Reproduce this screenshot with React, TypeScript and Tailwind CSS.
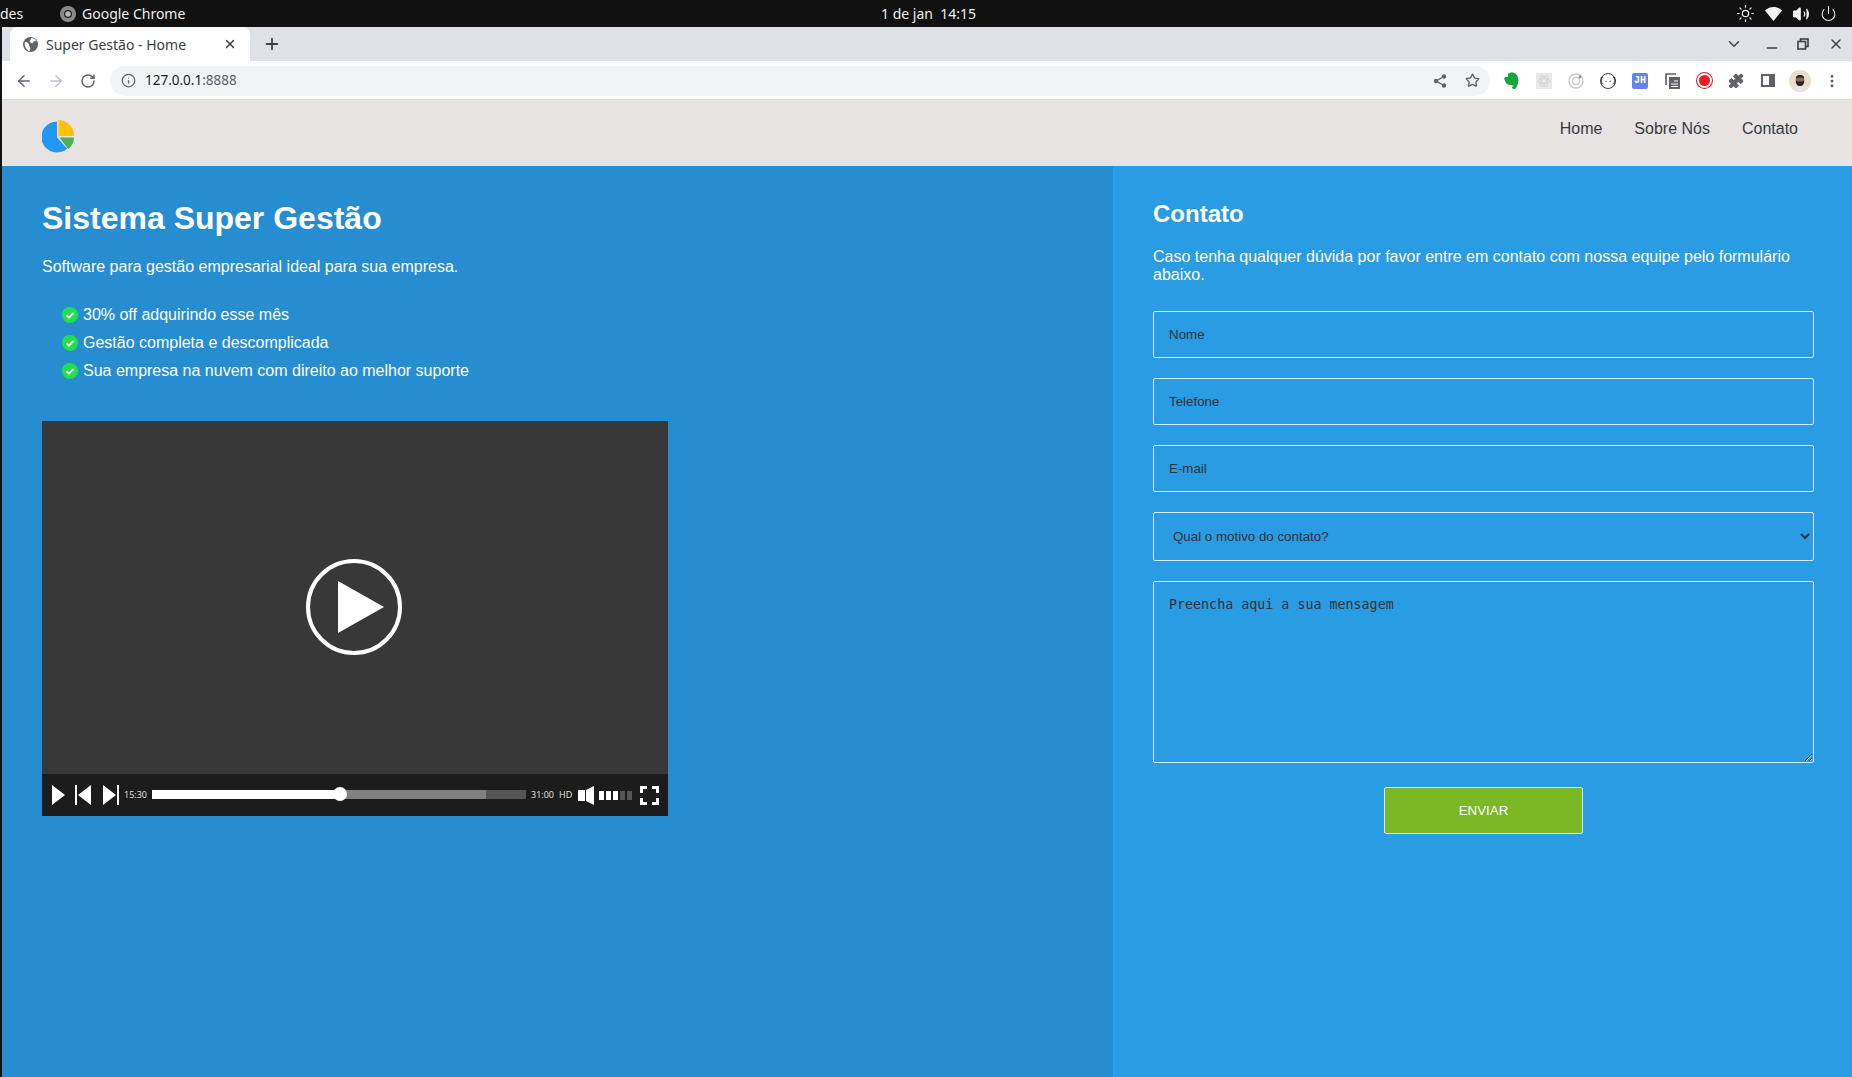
import { ArrowLeft, ArrowRight, RotateCw, Info, Star, X, Plus, ChevronDown, Minus, Puzzle, Volume2, Power, Sun, EllipsisVertical } from 'lucide-react';

const chromeFont = "font-['Noto_Sans',sans-serif]";

function TopBar() {
  return (
    <div className={`h-[27px] bg-[#111111] text-[#eeeeee] text-[14px] flex items-center ${chromeFont}`}>
      <span className="w-[60px] shrink-0 leading-none">des</span>
      <svg width="16" height="16" viewBox="0 0 16 16" className="shrink-0">
        <circle cx="8" cy="8" r="8" fill="#8a8a8a" />
        <circle cx="8" cy="8" r="4" fill="#222222" />
        <circle cx="8" cy="8" r="2.8" fill="#b5b5b5" />
      </svg>
      <span className="ml-[6px] w-[799px] shrink-0 whitespace-nowrap">Google Chrome</span>
      <span className="whitespace-pre w-[100px] shrink-0">1 de jan  14:15</span>
      <div className="ml-auto flex items-center gap-[10px] pr-[15px]">
        <Sun size={19} strokeWidth={1.5} />
        <svg width="17" height="14" viewBox="0 0 17 14">
          <path d="M0 3.5C2.5 1 5.5 0 8.5 0s6 1 8.5 3.5L8.5 14z" fill="#f5f5f5" />
        </svg>
        <Volume2 size={18} fill="#f5f5f5" strokeWidth={1.5} />
        <Power size={17} strokeWidth={1.5} />
      </div>
    </div>
  );
}

function TabStrip() {
  return (
    <div className={`h-[34px] bg-[#dee1e6] flex items-end pl-2 ${chromeFont}`}>
      <div className="w-[240px] h-[34px] bg-white rounded-t-lg flex items-center pl-[13px] pr-[13px] text-[#3c4043] text-[14px]">
        <svg width="15" height="15" viewBox="0 0 16 16" className="shrink-0">
          <circle cx="8" cy="8" r="8" fill="#5f6368" />
          <path d="M2 5c2 0 3 1 4 2s0 2 1 3 1 3 0 5C4 14 1 10 2 5zM9 1c2 0 4 1 5 3l-3 1-1 2-3-2z" fill="#ffffff" />
        </svg>
        <span className="ml-[8px] flex-1 whitespace-nowrap">Super Gestão - Home</span>
        <X size={14} strokeWidth={2.5} className="text-[#3c4043]" />
      </div>
      <div className="h-[34px] flex items-center ml-[13px] text-[#3c4043]">
        <Plus size={18} strokeWidth={2.4} />
      </div>
      <div className="ml-auto h-[34px] flex items-center text-[#3c4043]">
        <ChevronDown size={18} strokeWidth={2} />
        <Minus size={16} strokeWidth={2} className="ml-[21px] mt-[8px]" />
        <svg width="12" height="12" viewBox="0 0 12 12" className="ml-[17px]" fill="none" stroke="#3c4043" strokeWidth="1.6">
          <rect x="3.5" y="1" width="7.5" height="7.5" />
          <rect x="1" y="3.5" width="7.5" height="7.5" fill="#dee1e6" />
        </svg>
        <X size={16} strokeWidth={2} className="ml-[19px] mr-[8px]" />
      </div>
    </div>
  );
}

function ExtSlot({ children }: { children: React.ReactNode }) {
  return <div className="w-8 h-8 flex items-center justify-center shrink-0">{children}</div>;
}

function Toolbar() {
  return (
    <div className="h-[38px] bg-white flex items-center pl-[6px] pt-px">
      <ExtSlot><ArrowLeft size={18} strokeWidth={2} className="text-[#5f6368]" /></ExtSlot>
      <ExtSlot><ArrowRight size={18} strokeWidth={2} className="text-[#bdc1c6]" /></ExtSlot>
      <ExtSlot><RotateCw size={16} strokeWidth={2.2} className="text-[#5f6368]" /></ExtSlot>
      <div className="ml-[6px] w-[1380px] h-[30px] bg-[#f1f3f4] rounded-full flex items-center pl-[11px] pr-[2px] shrink-0">
        <Info size={15} strokeWidth={2} className="text-[#5f6368]" />
        <span className={`ml-[9px] text-[13.5px] text-[#202124] ${chromeFont}`}>
          127.0.0.1<span className="text-[#5f6368]">:8888</span>
        </span>
        <div className="ml-auto flex items-center">
          <ExtSlot>
            <svg width="14" height="14" viewBox="0 0 14 14" fill="#5f6368" stroke="#5f6368" strokeWidth="1.4">
              <path d="M11 2.500L3 7l8 4.500" fill="none" />
              <circle cx="11" cy="2.500" r="1.500" />
              <circle cx="3" cy="7" r="1.500" />
              <circle cx="11" cy="11.500" r="1.500" />
            </svg>
          </ExtSlot>
          <ExtSlot><Star size={15} strokeWidth={2.2} className="text-[#5f6368]" /></ExtSlot>
        </div>
      </div>
      <div className="ml-[6px] flex items-center">
        <ExtSlot>
          <svg width="16" height="18" viewBox="0 0 16 18">
            <path d="M4 2c2-2 6-2 8 0 2 2 3 6 2 9-.5 2-1 4-2 5-2 2-4 1-4-1 0-1 2-1 2 0 0-1-1-2-3-2-3 0-5-1-6-4 -1-2-1-3 0-4h3z" fill="#14a83b" />
          </svg>
        </ExtSlot>
        <ExtSlot>
          <div className="w-4 h-4 bg-[#e8e8e8] flex items-center justify-center">
            <svg width="14" height="14" viewBox="0 0 14 14" fill="none" stroke="#d2d2d2" strokeWidth="0.9">
              <ellipse cx="7" cy="7" rx="6" ry="2.400" />
              <ellipse cx="7" cy="7" rx="6" ry="2.400" transform="rotate(60 7 7)" />
              <ellipse cx="7" cy="7" rx="6" ry="2.400" transform="rotate(120 7 7)" />
            </svg>
          </div>
        </ExtSlot>
        <ExtSlot>
          <svg width="16" height="16" viewBox="0 0 16 16" fill="none" stroke="#c8c8c8" strokeWidth="1.3">
            <circle cx="8" cy="8" r="7" />
            <circle cx="8" cy="8" r="3.5" />
            <circle cx="12" cy="4" r="1.4" fill="#909090" stroke="none" />
          </svg>
        </ExtSlot>
        <ExtSlot>
          <div className="w-4 h-4 rounded-full border border-[#444444] flex items-center justify-center text-[7px] leading-none text-[#333333] font-bold font-['Liberation_Mono',monospace]">
            {'{..}'}
          </div>
        </ExtSlot>
        <ExtSlot>
          <div className="w-4 h-4 rounded-[2px] bg-[#6384ee] flex items-center justify-center text-[10px] leading-none font-bold text-white font-['Liberation_Mono',monospace]">
            JH
          </div>
        </ExtSlot>
        <ExtSlot>
          <svg width="15" height="16" viewBox="0 0 15 16">
            <path d="M1 12V1h10" fill="none" stroke="#5f6368" strokeWidth="1.6" />
            <rect x="4" y="4" width="11" height="12" fill="#5f6368" />
            <path d="M9 8h4M6 11h7M6 13.5h7" stroke="#ffffff" strokeWidth="1.2" />
          </svg>
        </ExtSlot>
        <ExtSlot>
          <div className="w-[11px] h-[11px] rounded-full bg-[#ee1c25] ring-1 ring-offset-2 ring-[#d02027]" />
        </ExtSlot>
        <ExtSlot><Puzzle size={16} fill="#5f6368" strokeWidth={1.5} className="text-[#5f6368]" /></ExtSlot>
        <ExtSlot>
          <svg width="14" height="13" viewBox="0 0 14 13">
            <rect x="1" y="1" width="12" height="11" fill="none" stroke="#5f6368" strokeWidth="2" />
            <rect x="8" y="1" width="5" height="11" fill="#5f6368" />
          </svg>
        </ExtSlot>
        <ExtSlot>
          <svg width="22" height="22" viewBox="0 0 22 22">
            <circle cx="11" cy="11" r="11" fill="#eadccb" />
            <path d="M3.500 19c1.500-3.500 13.500-3.500 15 0a11 11 0 0 1-15 0z" fill="#e6e6e6" />
            <ellipse cx="11" cy="10" rx="4.200" ry="5.200" fill="#8a6a55" />
            <path d="M6.800 9c-.5-5.500 9-5.500 8.400 0-1-2-7.400-2-8.400 0z" fill="#2a2422" />
            <path d="M6.800 10.500c1 1.500 7.400 1.500 8.400 0 .3 3.500-1.800 5.500-4.200 5.500s-4.500-2-4.200-5.500z" fill="#2a2422" />
          </svg>
        </ExtSlot>
        <ExtSlot><EllipsisVertical size={16} strokeWidth={2.5} className="text-[#5f6368]" /></ExtSlot>
      </div>
    </div>
  );
}

function Header() {
  return (
    <header className="h-[67px] bg-[#e7e3e2] flex items-center justify-between pl-10 pr-[54px] shrink-0 shadow-[inset_0_1px_0_#d9d9d9]">
      <svg width="33" height="33" viewBox="0 0 34 34" className="mt-[7px]">
        <path d="M15.5 1.5v16.5l10.5 11.5A16 16 0 1 1 15.5 1.5z" fill="#2196f3" />
        <path d="M17 0a16.500 16.500 0 0 1 16 16.500H17z" fill="#ffc107" />
        <path d="M18 18h15a16 16 0 0 1-6 12z" fill="#4caf50" />
      </svg>
      <nav className="flex items-center gap-8 text-[16px] text-[#343a40] -mt-[7px]">
        <a>Home</a>
        <a>Sobre Nós</a>
        <a>Contato</a>
      </nav>
    </header>
  );
}

function CheckBadge() {
  return (
    <svg width="16" height="16" viewBox="0 0 16 16" className="shrink-0">
      <circle cx="8" cy="8" r="8" fill="#22e04d" />
      <path d="M4.500 8.300l2.400 2.300 4.600-4.600" fill="none" stroke="#ffffff" strokeWidth="2" />
    </svg>
  );
}

function VideoControls() {
  return (
    <div className="h-[42px] bg-[#1c1c1c] flex items-center pl-[10px] pr-[9px] text-[#e8e8e8] text-[9px] font-['Open_Sans',sans-serif]">
      <svg width="13" height="20" viewBox="0 0 13 20" className="shrink-0"><path d="M0 0l13 10L0 20z" fill="#fff" /></svg>
      <svg width="16" height="20" viewBox="0 0 16 20" className="ml-[10px] shrink-0"><path d="M0 0h2v20H0zM16 0v20L3 10z" fill="#fff" /></svg>
      <svg width="16" height="20" viewBox="0 0 16 20" className="ml-[12px] shrink-0"><path d="M14 0h2v20h-2zM0 0v20l13-10z" fill="#fff" /></svg>
      <span className="ml-[5px] w-[23px] shrink-0">15:30</span>
      <div className="ml-[5px] -mt-px relative h-[9px] w-[374px] shrink-0 bg-[#555555]">
        <div className="absolute inset-y-0 left-0 w-[334px] bg-[#808080]" />
        <div className="absolute inset-y-0 left-0 w-[188px] bg-white" />
        <div className="absolute left-[181px] top-[-3px] w-[14px] h-[14px] rounded-full bg-white" />
      </div>
      <span className="ml-[5px] w-[23px] shrink-0">31:00</span>
      <span className="ml-[5px] w-[14px] shrink-0">HD</span>
      <svg width="16" height="19" viewBox="0 0 16 19" className="ml-[5px] shrink-0"><path d="M0 4h7v11H0zM8 4l8-4v19l-8-4z" fill="#fff" /></svg>
      <div className="ml-[5px] flex items-center gap-[2px] shrink-0">
        <div className="w-[5px] h-[9px] bg-white" />
        <div className="w-[5px] h-[9px] bg-white" />
        <div className="w-[5px] h-[9px] bg-white" />
        <div className="w-[5px] h-[9px] bg-[#555555]" />
        <div className="w-[5px] h-[9px] bg-[#555555]" />
      </div>
      <svg width="19" height="19" viewBox="0 0 19 19" className="ml-auto shrink-0" fill="none" stroke="#fff" strokeWidth="3">
        <path d="M1.500 7V1.500H7M12 1.500h5.500V7M17.500 12v5.500H12M7 17.500H1.500V12" />
      </svg>
    </div>
  );
}

function VideoPlaceholder() {
  return (
    <div className="w-[626px] h-[395px] flex flex-col bg-[#383838]">
      <div className="flex-1 flex items-center justify-center">
        <svg width="98" height="98" viewBox="0 0 98 98" className="mt-[19px] mr-[2px]">
          <circle cx="49" cy="49" r="46" fill="none" stroke="#fff" strokeWidth="4" />
          <path d="M33 23l46 26-46 26z" fill="#fff" />
        </svg>
      </div>
      <VideoControls />
    </div>
  );
}

const fieldClass =
  "block w-full h-[47px] px-[15px] bg-transparent border border-[#d6ecfa] rounded-[2px] text-[13.33px] text-[#333333] placeholder:text-[#333333] outline-none font-['Liberation_Sans',Arial,sans-serif]";

export default function App() {
  const perks = ['30% off adquirindo esse mês', 'Gestão completa e descomplicada', 'Sua empresa na nuvem com direito ao melhor suporte'];

  return (
    <div className="h-[1077px] w-full flex flex-col overflow-hidden bg-[#111111] font-['Liberation_Sans',Arial,sans-serif]">
      <TopBar />
      <div className="flex-1 flex flex-col border-l-2 border-[#111111] min-h-0">
        <TabStrip />
        <Toolbar />
        <Header />
        <main className="flex-1 flex min-h-0 text-white">
          <section className="w-[1111px] shrink-0 bg-[#268dd0] pl-10 pt-[33px]">
            <h1 className="text-[32px] leading-[38px] font-bold">Sistema Super Gestão</h1>
            <p className="mt-[21px] text-[16px] leading-[18px]">Software para gestão empresarial ideal para sua empresa.</p>
            <ul className="mt-[25px] pl-5 flex flex-col">
              {perks.map((perk) => (
                <li key={perk} className="h-[28px] flex items-center gap-[5px] text-[16px]">
                  <CheckBadge />
                  <span>{perk}</span>
                </li>
              ))}
            </ul>
            <div className="mt-[36px]">
              <VideoPlaceholder />
            </div>
          </section>
          <section className="flex-1 bg-[#299ce3] pl-10 pr-[38px] pt-[34px]">
            <h2 className="text-[24px] leading-[28px] font-bold">Contato</h2>
            <p className="mt-[20px] text-[16px] leading-[18px]">
              Caso tenha qualquer dúvida por favor entre em contato com nossa equipe pelo formulário abaixo.
            </p>
            <form className="mt-[27px] flex flex-col gap-5">
              <input type="text" placeholder="Nome" className={fieldClass} />
              <input type="text" placeholder="Telefone" className={fieldClass} />
              <input type="text" placeholder="E-mail" className={fieldClass} />
              <select defaultValue="" className="block w-full h-[49px] pl-[15px] bg-transparent border border-[#d6ecfa] rounded-[2px] text-[13.33px] text-[#333333] outline-none font-['Liberation_Sans',Arial,sans-serif]">
                <option value="">Qual o motivo do contato?</option>
              </select>
              <textarea
                placeholder="Preencha aqui a sua mensagem"
                className="block w-full h-[182px] px-[15px] py-[15px] bg-transparent border border-[#d6ecfa] rounded-[2px] text-[13.33px] leading-[16px] text-[#333333] placeholder:text-[#333333] outline-none font-['DejaVu_Sans_Mono',monospace]"
              />
              <button type="button" className="self-center mt-[4px] w-[199px] h-[47px] bg-[#7cb726] border border-[#d6ecfa] rounded-[2px] text-[13.33px] text-white">
                ENVIAR
              </button>
            </form>
          </section>
        </main>
      </div>
    </div>
  );
}
